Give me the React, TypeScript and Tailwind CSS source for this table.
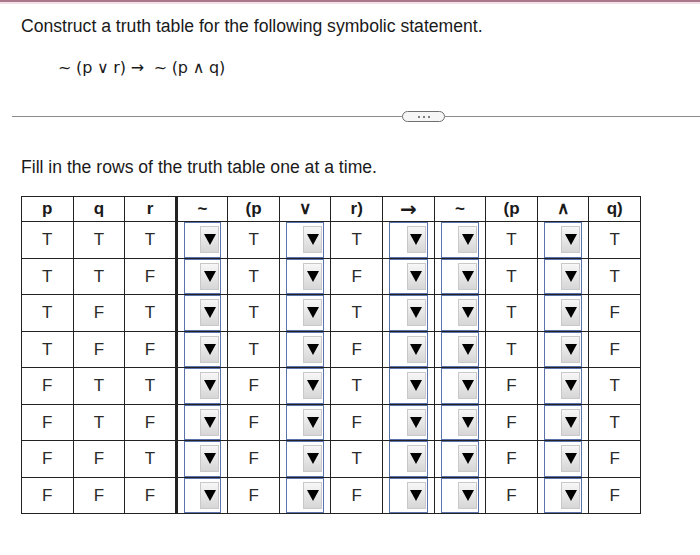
const headers = ["p", "q", "r", "~", "(p", "∨", "r)", "→", "~", "(p", "∧", "q)"]

const rows = [
  ["T", "T", "T"],
  ["T", "T", "F"],
  ["T", "F", "T"],
  ["T", "F", "F"],
  ["F", "T", "T"],
  ["F", "T", "F"],
  ["F", "F", "T"],
  ["F", "F", "F"],
]

// columns that hold a dropdown; others are given values
const selectCols = [3, 5, 7, 8, 10]

function Dropdown() {
  return (
    <div className="mx-[6px] h-full border border-[#5a73ad] bg-white flex items-center justify-end pr-[1px]">
      <div className="w-[19px] h-[27px] bg-gradient-to-b from-[#f7f7f7] to-[#d6d6d6] border border-[#c9c9c9] flex items-center justify-center">
        <svg width="12" height="11" viewBox="0 0 12 11">
          <path d="M0 0 H12 L6 11 Z" fill="#000" />
        </svg>
      </div>
    </div>
  )
}

function cellValue(row: string[], col: number) {
  const p = row[0]
  const q = row[1]
  const r = row[2]
  if (col === 0) return p
  if (col === 1) return q
  if (col === 2) return r
  if (col === 4 || col === 9) return p
  if (col === 6) return r
  if (col === 11) return q
  return ""
}

export default function App() {
  return (
    <div className="w-[700px] h-[555px] bg-white overflow-hidden font-['Liberation_Sans',Arial,sans-serif] text-[#1a1a1a]">
      <div className="h-[2px] bg-[#a9788a]" />
      <div className="h-[2px] bg-[#f4e1e7]" />

      <p className="mt-[12px] ml-[21px] text-[17.6px] leading-[20px]">
        Construct a truth table for the following symbolic statement.
      </p>
      <p className="mt-[23px] ml-[58px] text-[16px] leading-[18px] font-['DejaVu_Sans','Liberation_Sans',sans-serif] tracking-[-0.2px]">
        ~ (p ∨ r) → &nbsp;~ (p ∧ q)
      </p>

      <div className="mt-[34px] ml-[12px] flex items-center">
        <div className="h-px bg-[#8c8c8c] w-[390px]" />
        <div className="w-[43px] h-[11px] rounded-full border border-[#6f6f6f] bg-[#f6f6f6] flex items-center justify-center gap-[3px]">
          <span className="w-[2px] h-[2px] rounded-full bg-[#555]" />
          <span className="w-[2px] h-[2px] rounded-full bg-[#555]" />
          <span className="w-[2px] h-[2px] rounded-full bg-[#555]" />
        </div>
        <div className="h-px bg-[#8c8c8c] flex-1" />
      </div>

      <p className="mt-[35px] ml-[21px] text-[17.6px] leading-[20px]">
        Fill in the rows of the truth table one at a time.
      </p>

      <table className="mt-[19px] ml-[21px] w-[620px] border-collapse table-fixed">
        <thead>
          <tr className="h-[25px]">
            {headers.map((h, i) => (
              <th
                key={i}
                className={`border border-[#222] font-bold p-0 leading-[20px] ${
                  h === "→" ? "text-[20px] font-['DejaVu_Sans',sans-serif]" : "text-[17px]"
                } ${i === 3 ? "border-l-[3px]" : ""}`}
              >
                {h}
              </th>
            ))}
          </tr>
        </thead>
        <tbody>
          {rows.map((row, ri) => (
            <tr key={ri} className="h-[36px]">
              {headers.map((_, ci) => (
                <td
                  key={ci}
                  className={`border border-[#222] p-0 text-center text-[17px] text-[#2a2a2a] ${
                    ci === 3 ? "border-l-[3px]" : ""
                  }`}
                >
                  {selectCols.includes(ci) ? (
                    <div className="h-[35.5px]">
                      <Dropdown />
                    </div>
                  ) : (
                    cellValue(row, ci)
                  )}
                </td>
              ))}
            </tr>
          ))}
        </tbody>
      </table>
    </div>
  )
}
